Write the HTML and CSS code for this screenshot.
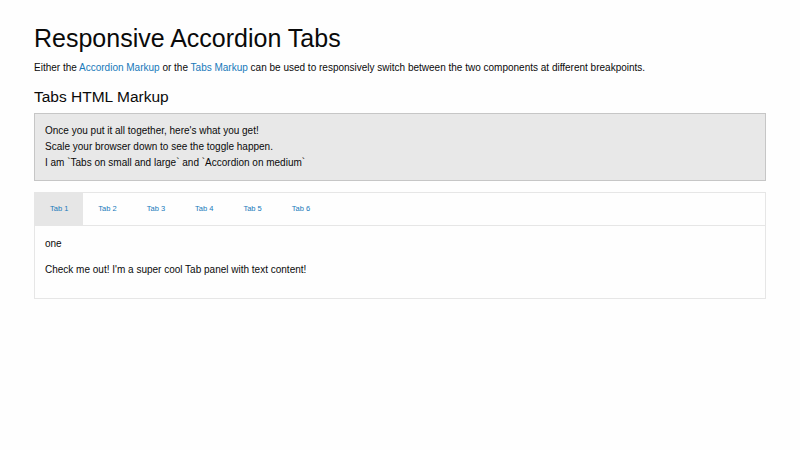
FILE: index.html
```html
<!DOCTYPE html>
<html lang="en">
<head>
<meta charset="utf-8">
<title>Responsive Accordion Tabs</title>
<link rel="stylesheet" href="styles.css">
</head>
<body>
<main class="page">
  <h1 class="title">Responsive Accordion Tabs</h1>
  <p class="lead">Either the <a href="#">Accordion Markup</a> or the <a href="#">Tabs Markup</a> can be used to responsively switch between the two components at different breakpoints.</p>
  <h2 class="subtitle">Tabs HTML Markup</h2>
  <div class="callout">
    <p>Once you put it all together, here's what you get!</p>
    <p>Scale your browser down to see the toggle happen.</p>
    <p>I am `Tabs on small and large` and `Accordion on medium`</p>
  </div>
  <div class="tabs">
    <ul class="tab-list">
      <li class="tab is-active"><a href="#">Tab 1</a></li>
      <li class="tab"><a href="#">Tab 2</a></li>
      <li class="tab"><a href="#">Tab 3</a></li>
      <li class="tab"><a href="#">Tab 4</a></li>
      <li class="tab"><a href="#">Tab 5</a></li>
      <li class="tab"><a href="#">Tab 6</a></li>
    </ul>
    <div class="tab-panel">
      <p>one</p>
      <p>Check me out! I'm a super cool Tab panel with text content!</p>
    </div>
  </div>
</main>
</body>
</html>
```
FILE: styles.css
```css
html, body {
  margin: 0;
  padding: 0;
  background: #fefefe;
  color: #0a0a0a;
  font-family: "Liberation Sans", Arial, sans-serif;
}

.page {
  padding: 23px 34px 0;
}

a {
  color: #1779ba;
  text-decoration: none;
}

.title {
  margin: 0;
  font-size: 25px;
  font-weight: 400;
  line-height: 30px;
}

.lead {
  margin: 6px 0 0;
  font-size: 10px;
  line-height: 17px;
}

.subtitle {
  margin: 11px 0 0;
  font-size: 15.5px;
  font-weight: 400;
  line-height: 20px;
}

.callout {
  margin-top: 6px;
  padding: 9px 10px;
  background: #e8e8e8;
  border: 1px solid #c6c6c6;
}

.callout p {
  margin: 0;
  font-size: 10px;
  line-height: 16px;
}

.tabs {
  margin-top: 11px;
  border: 1px solid #e6e6e6;
  background: #fefefe;
}

.tab-list {
  display: flex;
  margin: 0;
  padding: 0;
  list-style: none;
  border-bottom: 1px solid #e6e6e6;
}

.tab a {
  display: block;
  padding: 12px 15px;
  font-size: 7.5px;
  line-height: 8px;
}

.tab.is-active a {
  background: #e6e6e6;
}

.tab-panel {
  padding: 10px;
}

.tab-panel p {
  margin: 0 0 10px;
  font-size: 10px;
  line-height: 16px;
}
```
